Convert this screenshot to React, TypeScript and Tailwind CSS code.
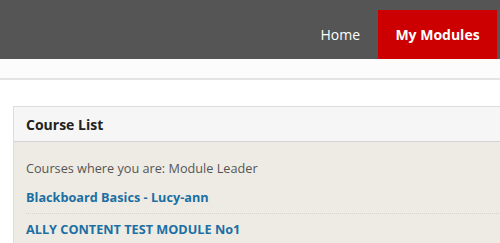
export default function App() {
  return (
    <div className="w-[500px] h-[243px] overflow-hidden bg-white font-['Open_Sans',sans-serif]">
      <div className="h-[59px] bg-[#555555] flex justify-end items-end pr-[3px]">
        <div className="h-[49px] flex items-center pr-[18px] text-[14px] text-white">Home</div>
        <div className="h-[49px] w-[119px] bg-[#cc0000] flex items-center justify-center text-[14px] font-bold text-white">
          My Modules
        </div>
      </div>
      <div className="h-[21px] bg-[#fcfcfc] border-b-2 border-[#e4e4e4]" />
      <div className="pt-[26px] pl-[13px]">
        <div className="border border-r-0 border-[#dddddd] w-[500px]">
          <div className="h-[35px] bg-[#f6f6f6] border-b border-[#d4d4d4] flex items-center pl-[12px] text-[14px] font-bold text-[#222222]">
            Course List
          </div>
          <div className="bg-[#eeebe4] pl-[12px] pt-[17px] pb-[10px]">
            <div className="text-[12.7px] text-[#555555] leading-[18px]">Courses where you are: Module Leader</div>
            <div className="mt-[11px] text-[12.7px] font-bold text-[#1b6fa3] leading-[18px]">Blackboard Basics - Lucy-ann</div>
            <div className="mt-[7px] border-t border-dotted border-[#d8d4cc]" />
            <div className="mt-[6px] text-[12.7px] font-bold text-[#1b6fa3] leading-[18px]">ALLY CONTENT TEST MODULE No1</div>
          </div>
        </div>
      </div>
    </div>
  );
}
